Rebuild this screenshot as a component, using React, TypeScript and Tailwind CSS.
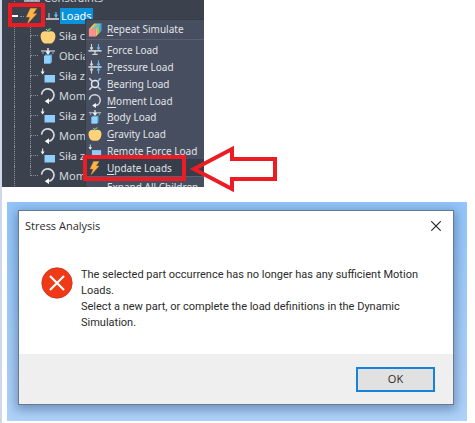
import type { ReactNode } from 'react';

type IconName =
  | 'apple'
  | 'body'
  | 'remote'
  | 'moment'
  | 'force'
  | 'pressure'
  | 'bearing'
  | 'simulate'
  | 'bolt';

const drawings: Record<IconName, ReactNode> = {
  apple: (
    <>
      <path d="M8 4C6 2.4 0.6 2.8 0.6 8C0.6 12 3 15.6 5.6 15.6H10.4C13 15.6 15.4 12 15.4 8C15.4 2.8 10 2.4 8 4Z" fill="#ffd27a" />
      <path d="M8 4.4C7.8 3 7.2 1.8 6 1" stroke="#e8e3d4" strokeWidth="1" fill="none" />
      <path d="M7.6 3C7.6 1 9 0 11 0.2C10.8 2.2 9.6 3.2 7.6 3Z" fill="#4fc96a" />
    </>
  ),
  body: (
    <>
      <path d="M1 3H15" stroke="#a5aebb" strokeWidth="1.6" />
      <path d="M8 0V5M6.2 3.4L8 5.8L9.8 3.4" stroke="#f2f4f7" strokeWidth="1.3" fill="none" />
      <path d="M3 3V6M13 3V6" stroke="#8d98a8" strokeWidth="1.2" fill="none" />
      <path d="M4 8L5.5 6.5H12V14L10.5 15.5H4Z" fill="#5fb4ee" />
      <path d="M4 8H10.5V15.5H4Z" fill="#93d0fb" />
    </>
  ),
  remote: (
    <>
      <path d="M4.5 7H15V14.5H4.5Z" fill="#8fcdfd" />
      <path d="M2.6 0.5V5" stroke="#d2d7de" strokeWidth="1.2" />
      <path d="M0.6 3.6H4.6L2.6 6.6Z" fill="#f2f4f7" />
    </>
  ),
  moment: (
    <>
      <path d="M1.6 6.6A6.2 6.2 0 1 1 8.4 13.2" stroke="#d4d8de" strokeWidth="1.7" fill="none" />
      <path d="M4.8 13.2L9 10.2V16Z" fill="#fff" />
    </>
  ),
  force: (
    <>
      <path d="M0.5 9H15.5" stroke="#e6e9ed" strokeWidth="1.6" />
      <path d="M4 1V7M2.4 5L4 7.4L5.6 5" stroke="#d2d7de" strokeWidth="1.2" fill="none" />
      <path d="M12 1V7M10.4 5L12 7.4L13.6 5" stroke="#62b8f2" strokeWidth="1.2" fill="none" />
      <path d="M8 9V12M5 13H11" stroke="#d2d7de" strokeWidth="1.6" />
    </>
  ),
  pressure: (
    <>
      <path d="M0.5 8H15.5" stroke="#e6e9ed" strokeWidth="1.6" />
      <path d="M4 0.5V6M2.4 4.2L4 6.4L5.6 4.2M4 15.5V10M2.4 11.8L4 9.6L5.6 11.8" stroke="#d2d7de" strokeWidth="1.2" fill="none" />
      <path d="M12 0.5V6M10.4 4.2L12 6.4L13.6 4.2M12 15.5V10M10.4 11.8L12 9.6L13.6 11.8" stroke="#62b8f2" strokeWidth="1.2" fill="none" />
    </>
  ),
  bearing: (
    <>
      <circle cx="8" cy="8" r="4" stroke="#e6e9ed" strokeWidth="1.7" fill="none" />
      <path d="M1.5 1.5L5 5M1.5 14.5L5 11" stroke="#d2d7de" strokeWidth="1.8" />
      <path d="M14.5 1.5L11 5M14.5 14.5L11 11" stroke="#8cc4ec" strokeWidth="1.8" />
    </>
  ),
  simulate: (
    <>
      <path d="M1 7L7 0.5H10L4 7Z" fill="#f9c46b" />
      <path d="M4 7L10 0.5H12.5L6.5 7Z" fill="#7be07f" />
      <path d="M6.5 7L12.5 0.5H15.5L9 7Z" fill="#68c6f5" />
      <path d="M1 6.5H9V15.5H1Z" fill="#ff8f8a" />
      <path d="M9 6.8L11.2 4.5V13.2L9 15.5Z" fill="#f6c45c" />
      <path d="M11.2 4.5L13.4 2.4V11L11.2 13.2Z" fill="#79d67d" />
      <path d="M13.4 2.4L15.5 0.5V8.8L13.4 11Z" fill="#4c9fe6" />
    </>
  ),
  bolt: (
    <path d="M6.4 0.5H12.6L9 5.8H12.6L3.6 15.6L6 9H2.4Z" fill="#ffb545" stroke="#e8963a" strokeWidth="0.6" />
  ),
};

function Icon({ name, className = 'size-4' }: { name: IconName; className?: string }) {
  return (
    <svg viewBox="0 0 16 16" className={`shrink-0 ${className}`} aria-hidden="true">
      {drawings[name]}
    </svg>
  );
}

const treeItems: { icon: IconName; label: string }[] = [
  { icon: 'apple', label: 'Siła c' },
  { icon: 'body', label: 'Obcia' },
  { icon: 'remote', label: 'Siła z' },
  { icon: 'moment', label: 'Mom' },
  { icon: 'remote', label: 'Siła z' },
  { icon: 'moment', label: 'Mom' },
  { icon: 'remote', label: 'Siła z' },
  { icon: 'moment', label: 'Mom' },
];

const loadItems: { icon: IconName; label: string; mnemonic?: boolean }[] = [
  { icon: 'force', label: 'Force Load', mnemonic: true },
  { icon: 'pressure', label: 'Pressure Load', mnemonic: true },
  { icon: 'bearing', label: 'Bearing Load', mnemonic: true },
  { icon: 'moment', label: 'Moment Load', mnemonic: true },
  { icon: 'body', label: 'Body Load', mnemonic: true },
  { icon: 'apple', label: 'Gravity Load', mnemonic: true },
  { icon: 'remote', label: 'Remote Force Load' },
  { icon: 'bolt', label: 'Update Loads', mnemonic: true },
];

function MenuLabel({ text, mnemonic }: { text: string; mnemonic?: boolean }) {
  if (!mnemonic) return <span>{text}</span>;
  return (
    <span>
      <span className="underline underline-offset-2">{text[0]}</span>
      {text.slice(1)}
    </span>
  );
}

function LoadTree() {
  return (
    <ul className="flex h-full flex-col justify-end pb-px text-[11px] leading-5 text-[#d5d9df]">
      <li className="flex h-4 shrink-0 items-center pl-3">
        <span className="h-full w-2.5 border-l border-dotted border-[#8b919b]" />
        <svg viewBox="0 0 16 16" className="size-4" aria-hidden="true">
          <path d="M0 11H16M4 8V11M8 8V11M12 8V11" stroke="#c3c8cf" strokeWidth="1.5" />
        </svg>
        <span className="pl-1">Constraints</span>
      </li>
      <li className="flex h-5 shrink-0 items-center pl-2">
        <span className="flex w-3.5 items-center">
          <span className="ml-0.5 h-0.5 w-1.5 bg-white" />
          <span className="ml-0.5 w-1 border-t border-dotted border-[#8b919b]" />
        </span>
        <Icon name="bolt" />
        <svg viewBox="0 0 14 16" className="ml-1.5 h-4 w-3.5" aria-hidden="true">
          <path d="M0 11H13" stroke="#d5d9df" strokeWidth="1.6" />
          <path d="M3 5V10" stroke="#c3c8cf" strokeWidth="1" />
          <path d="M10 4V9M8.6 6.6L10 9L11.4 6.6" stroke="#62b8f2" strokeWidth="1.2" fill="none" />
        </svg>
        <span className="bg-[#0a93dc] px-px leading-4 text-white">Loads</span>
      </li>
      {treeItems.map((item, i) => (
        <li key={i} className="flex h-5 shrink-0 items-center pl-3">
          <span className="h-full w-4 border-l border-dotted border-[#8b919b]" />
          <span className="flex h-full w-2 flex-col">
            <span className="h-1/2 border-b border-l border-dotted border-[#8b919b]" />
            {i < treeItems.length - 1 && (
              <span className="h-1/2 border-l border-dotted border-[#8b919b]" />
            )}
          </span>
          <Icon name={item.icon} className="ml-0.5 size-4" />
          <span className="pl-[3px] whitespace-nowrap">{item.label}</span>
        </li>
      ))}
    </ul>
  );
}

function ContextMenu() {
  return (
    <div className="absolute top-[19px] right-0 bottom-0 left-[83px] overflow-hidden border-t border-l border-[#363c48] bg-[#474e5f] text-[10px] text-[#e1e4e8]">
      <button className="flex h-[19px] w-full items-center gap-[5px] pl-0.5">
        <Icon name="simulate" className="size-3.5" />
        <MenuLabel text="Repeat Simulate" mnemonic />
      </button>
      <div className="h-px bg-[#596071]" />
      <div className="mt-0.5 flex h-[134px] flex-col">
        {loadItems.map((item) => (
          <button
            key={item.label}
            className={`flex w-full flex-1 items-center gap-[5px] pl-0.5 leading-4 whitespace-nowrap ${
              item.icon === 'bolt' ? 'bg-[#373e4b]' : ''
            }`}
          >
            <Icon name={item.icon} className="size-3.5" />
            <MenuLabel text={item.label} mnemonic={item.mnemonic} />
          </button>
        ))}
      </div>
      <div className="h-px bg-[#596071]" />
      <button className="mt-0.5 flex h-[17px] items-center pl-[21px] whitespace-nowrap">
        Expand All Children
      </button>
    </div>
  );
}

function BrowserPanel() {
  return (
    <section className="relative h-[187px] w-[202px]">
      <div className="absolute inset-0 overflow-hidden bg-[#3b424e] font-['Noto_Sans',sans-serif]">
        <LoadTree />
        <ContextMenu />
      </div>
      {/* Red call-outs drawn over the tree and the menu */}
      <div className="absolute top-[3px] left-1.5 h-6 w-[37px] border-4 border-[#ed1c24]" />
      <div className="absolute top-[155px] left-[81px] h-[26px] w-[103px] border-4 border-[#ed1c24]" />
      <svg viewBox="0 0 92 48" className="absolute top-[145px] left-[185px] h-12 w-[92px]" aria-hidden="true">
        <path d="M7 24L45 4V14H88V34H45V44Z" fill="none" stroke="#ed1c24" strokeWidth="4" />
      </svg>
    </section>
  );
}

function ErrorDialog() {
  return (
    <div
      role="alertdialog"
      aria-labelledby="dialog-title"
      aria-describedby="dialog-text"
      className="border border-[#697a90] bg-white text-[#2b2b2b] shadow-[0_3px_10px_2px_rgba(40,70,110,0.45)]"
    >
      <header className="flex h-[30px] items-center justify-between pr-3 pl-1.5">
        <h1 id="dialog-title" className="text-[11px]">
          Stress Analysis
        </h1>
        <button aria-label="Close">
          <svg viewBox="0 0 10 10" className="size-2.5" aria-hidden="true">
            <path d="M0.3 0.3L9.7 9.7M9.7 0.3L0.3 9.7" stroke="#222" strokeWidth="1.1" />
          </svg>
        </button>
      </header>
      <div className="flex h-[113px] items-start gap-2 pt-[26px] pl-[22px]">
        <svg viewBox="0 0 32 32" className="size-8 shrink-0" aria-hidden="true">
          <circle cx="16" cy="16" r="15.2" fill="#f03a17" stroke="#c9351a" strokeWidth="0.8" />
          <path d="M9 9L23 23M23 9L9 23" stroke="#fff" strokeWidth="2.2" />
        </svg>
        <p id="dialog-text" className="font-['Roboto',sans-serif] text-[11px] leading-4 whitespace-nowrap">
          The selected part occurrence has no longer has any sufficient Motion
          <br />
          Loads.
          <br />
          Select a new part, or complete the load definitions in the Dynamic
          <br />
          Simulation.
        </p>
      </div>
      <footer className="flex h-[50px] items-center justify-end bg-[#efefef] pr-[18px]">
        <button className="h-[25px] w-[79px] border-2 border-[#1583dc] bg-[#e1e1e1] text-[11px] leading-5">
          OK
        </button>
      </footer>
    </div>
  );
}

export default function App() {
  return (
    <div className="flex min-h-screen bg-white font-['Open_Sans',sans-serif]">
      <div className="w-0.5 bg-[#cfd8e8]" />
      <main className="min-w-0 flex-1">
        <BrowserPanel />
        <section className="mt-[15px] mr-2 mb-0.5 ml-[5px] overflow-hidden bg-linear-to-b from-[#93c5fa] to-[#afd2f8] pt-2 pr-[13px] pb-4 pl-[11px]">
          <ErrorDialog />
        </section>
      </main>
    </div>
  );
}
